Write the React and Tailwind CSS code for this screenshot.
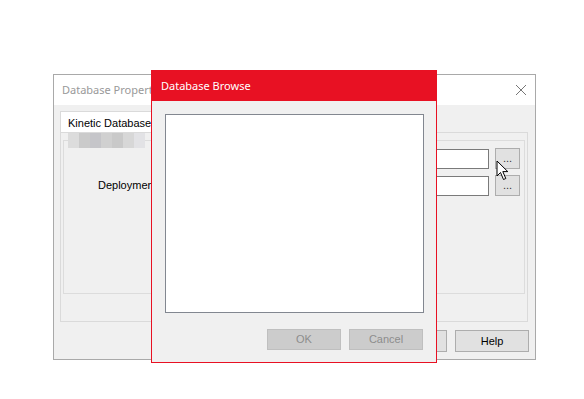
const sans = { fontFamily: '"Liberation Sans", Arial, sans-serif' };
const ui = { fontFamily: '"Noto Sans", "Open Sans", sans-serif' };

const pixelCols = ["#dcdcdc", "#cacaca", "#c5c5c9", "#d0d0d0", "#c9c9c9", "#d7d7d7", "#e2e2e5"];

function Cursor() {
  return (
    <svg width="14" height="22" viewBox="0 0 14 22" className="absolute left-[496px] top-[160px]">
      <path d="M1 1 L1 16 L4.5 12.5 L7.5 19.5 L9.8 18.5 L6.8 11.6 L11.8 11.6 Z" fill="#fff" stroke="#000" strokeWidth="1" strokeLinejoin="round" />
    </svg>
  );
}

function Pixelated() {
  return (
    <div className="absolute left-[7px] top-0 flex h-[15px]">
      {pixelCols.map((c, i) => (
        <div key={i} className="h-full w-[11px]" style={{ background: c }} />
      ))}
    </div>
  );
}

function FieldRow({ label }) {
  return (
    <div className="flex h-[21px] items-center">
      <span className="pl-[34px] text-[11px] text-black">{label}</span>
      <div className="ml-auto h-[20px] w-[200px] border border-[#7a7a7a] bg-white" />
      <div className="ml-[6px] flex h-[21px] w-[25px] items-center justify-center border border-[#adadad] bg-[#e1e1e1] text-[11px] text-[#333]">...</div>
    </div>
  );
}

function WinButton({ children, className = "" }) {
  return (
    <div className={"flex h-[22px] w-[74px] items-center justify-center border border-[#adadad] bg-[#e1e1e1] text-[11px] text-black " + className}>
      {children}
    </div>
  );
}

function BackDialog() {
  return (
    <div className="absolute left-[53px] top-[74px] flex h-[286px] w-[483px] flex-col border border-[#a9a9a9] bg-[#f0f0f0]" style={sans}>
      <div className="flex h-[30px] shrink-0 items-center justify-between bg-white px-[8px]">
        <span className="text-[11px] text-[#999]" style={ui}>Database Properties</span>
        <svg width="12" height="12" viewBox="0 0 12 12">
          <path d="M1 1 L11 11 M11 1 L1 11" stroke="#777" strokeWidth="1" />
        </svg>
      </div>
      <div className="flex flex-col px-[6px] pt-[6px]">
        <div className="h-[21px] w-[120px] border border-b-0 border-[#dadada] bg-white pl-[7px] pt-[3px] text-[11px] text-black">
          Kinetic Database
        </div>
        <div className="relative h-[190px] w-[468px] border border-[#dadada] bg-[#f0f0f0] px-[2px] pt-[7px]">
          <div className="flex h-[154px] flex-col gap-[6px] border border-[#dcdcdc] pr-[4px] pt-[7px]">
            <FieldRow label="" />
            <FieldRow label="Deployment" />
          </div>
          <Pixelated />
        </div>
        <div className="mt-[8px] flex justify-end gap-[8px]">
          <WinButton />
          <WinButton>Help</WinButton>
        </div>
      </div>
    </div>
  );
}

function BrowseDialog() {
  return (
    <div className="absolute left-[151px] top-[70px] flex h-[293px] w-[286px] flex-col border border-[#e81123] bg-[#f0f0f0]">
      <div className="flex h-[30px] shrink-0 items-center bg-[#e81123] pl-[9px] text-[11px] text-white" style={ui}>
        Database Browse
      </div>
      <div className="ml-[13px] mt-[13px] h-[199px] w-[259px] border border-[#828790] bg-white" />
      <div className="mt-[16px] flex justify-end gap-[8px] pr-[13px]" style={sans}>
        <div className="flex h-[21px] w-[74px] items-center justify-center border border-[#bfbfbf] bg-[#cccccc] text-[11px] text-[#8d8d8d]">OK</div>
        <div className="flex h-[21px] w-[74px] items-center justify-center border border-[#bfbfbf] bg-[#cccccc] text-[11px] text-[#8d8d8d]">Cancel</div>
      </div>
    </div>
  );
}

export default function App() {
  return (
    <div className="relative h-[399px] w-[584px] overflow-hidden bg-white">
      <BackDialog />
      <BrowseDialog />
      <Cursor />
    </div>
  );
}
